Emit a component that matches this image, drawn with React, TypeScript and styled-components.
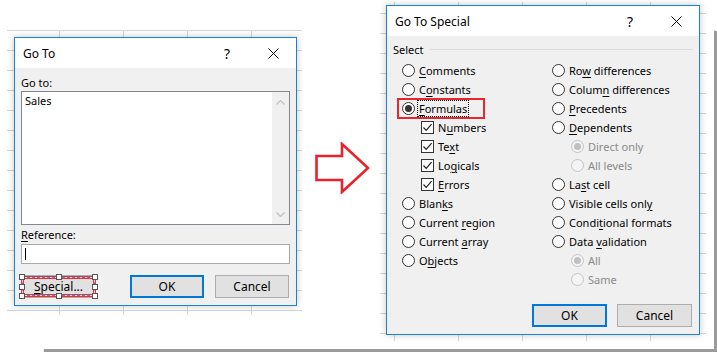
import React, { FC } from 'react';
import styled, { createGlobalStyle, css } from 'styled-components';

const GlobalStyle = createGlobalStyle`
  html, body {
    margin: 0;
    padding: 0;
    background: #fff;
  }
  body {
    font-family: 'Noto Sans', 'DejaVu Sans', sans-serif;
    font-size: 11px;
    color: #000;
  }
`;

const Page = styled.div`
  width: 717px;
  height: 352px;
  overflow: hidden;
`;

const Frame = styled.div`
  box-sizing: border-box;
  width: 714px;
  height: 349px;
  padding-left: 7px;
  display: flex;
  align-items: flex-start;
  background: #fff;
  box-shadow: 30px 17px 1px -14px #9b9b9b;
`;

const Sheet = styled.div<{ $w: number; $h: number; $col: number; $row: number }>`
  box-sizing: border-box;
  flex: none;
  width: ${p => p.$w}px;
  height: ${p => p.$h}px;
  background-color: #fff;
  background-image: linear-gradient(to right, #d4d4d4 1px, transparent 1px),
    linear-gradient(to bottom, #d4d4d4 1px, transparent 1px);
  background-size: 64px 20px;
  background-position: ${p => p.$col}px 0, 0 ${p => p.$row}px;
`;

const LeftSheet = styled(Sheet)`
  margin-top: 30px;
  padding: 7px 0 0 7px;
`;

const RightSheet = styled(Sheet)`
  margin: 2px 0 0 9px;
  padding: 3px 0 0 6px;
`;

const ArrowWrap = styled.svg`
  flex: none;
  margin: 142px 0 0 13px;
`;

const Dialog = styled.div<{ $w: number; $h: number }>`
  box-sizing: border-box;
  width: ${p => p.$w}px;
  height: ${p => p.$h}px;
  border: 1px solid #1883d7;
  background: #f0f0f0;
  box-shadow: 0 0 7px rgba(0, 0, 0, 0.22);
  display: flex;
  flex-direction: column;
`;

const TitleBar = styled.div`
  flex: none;
  height: 30px;
  display: flex;
  align-items: center;
  background: #fff;
  padding-left: 8px;
`;

const Title = styled.div`
  flex: 1;
  font-size: 12px;
`;

const TitleButton = styled.div`
  width: 46px;
  height: 30px;
  display: flex;
  align-items: center;
  justify-content: center;
  font-size: 14px;
`;

const Body = styled.div<{ $top: number }>`
  flex: 1;
  display: flex;
  flex-direction: column;
  padding: ${p => p.$top}px 6px 7px 6px;
`;

const Label = styled.div`
  height: 16px;
  line-height: 16px;
  white-space: nowrap;
`;

const Mn = styled.span`
  text-decoration: underline;
  text-underline-offset: 2px;
`;

const ListBox = styled.div`
  box-sizing: border-box;
  height: 134px;
  display: flex;
  border: 1px solid #828790;
  background: #fff;
`;

const ListItems = styled.div`
  flex: 1;
  padding: 1px 3px;
  line-height: 16px;
`;

const ScrollTrack = styled.div`
  width: 17px;
  display: flex;
  flex-direction: column;
  justify-content: space-between;
  align-items: center;
  padding: 8px 0 7px;
  background: #f0f0f0;
`;

const RefLabel = styled(Label)`
  margin: 2px 0 1px;
`;

const TextInput = styled.div`
  box-sizing: border-box;
  height: 20px;
  display: flex;
  align-items: center;
  padding-left: 3px;
  border: 1px solid #a9a9a9;
  background: #fff;
`;

const Caret = styled.span`
  width: 1px;
  height: 12px;
  background: #000;
`;

const Footer = styled.div<{ $gap: number }>`
  margin-top: auto;
  display: flex;
  justify-content: flex-end;
  gap: ${p => p.$gap}px;
  padding-right: 1px;
`;

const Button = styled.div<{ $default?: boolean; $w?: number }>`
  position: relative;
  box-sizing: border-box;
  width: ${p => p.$w ?? 75}px;
  height: 23px;
  display: flex;
  align-items: center;
  justify-content: center;
  font-size: 12px;
  background: #e1e1e1;
  border: 1px solid #adadad;
  ${p =>
    p.$default &&
    css`
      border: 2px solid #0078d7;
    `}
`;

const SpecialButton = styled(Button)`
  margin-right: auto;
`;

const Selection = styled.span`
  position: absolute;
  top: 0;
  bottom: 0;
  left: -1px;
  right: -1px;
  border: 1px solid #ea3033;
`;

const SelectionDash = styled.span`
  position: absolute;
  inset: 0;
  border: 1px dashed #5a80d2;
  box-shadow: inset 0 0 0 1px #ea3033;
`;

const Handle = styled.span<{ $x: number; $y: number }>`
  position: absolute;
  left: ${p => p.$x}%;
  top: ${p => p.$y}%;
  width: 4px;
  height: 4px;
  transform: translate(-50%, -50%);
  background: #fff;
  border: 1px solid #555;
`;

const GroupHeader = styled.div`
  display: flex;
  align-items: center;
  height: 16px;
`;

const GroupLine = styled.div`
  flex: 1;
  height: 1px;
  margin-left: 6px;
  background: #dcdcdc;
`;

const OptionGrid = styled.div`
  display: grid;
  grid-template-columns: 150px 1fr;
  padding: 4px 0 0 9px;
`;

const Column = styled.div`
  display: flex;
  flex-direction: column;
`;

const OptionRow = styled.div<{ $indent?: boolean; $disabled?: boolean }>`
  position: relative;
  height: 19px;
  display: flex;
  align-items: center;
  gap: 4px;
  padding-left: ${p => (p.$indent ? 19 : 0)}px;
  white-space: nowrap;
  color: ${p => (p.$disabled ? '#8a8a8a' : '#000')};
`;

const RadioCircle = styled.span<{ $checked?: boolean; $disabled?: boolean }>`
  box-sizing: border-box;
  flex: none;
  width: 13px;
  height: 13px;
  border-radius: 50%;
  border: 1px solid ${p => (p.$disabled ? '#c4c4c4' : '#333')};
  background: ${p => (p.$disabled ? '#f4f4f4' : '#fff')};
  display: flex;
  align-items: center;
  justify-content: center;
  &::after {
    content: '';
    width: 7px;
    height: 7px;
    border-radius: 50%;
    background: ${p => (p.$disabled ? '#c0c0c0' : '#333')};
    display: ${p => (p.$checked ? 'block' : 'none')};
  }
`;

const CheckBox = styled.span`
  box-sizing: border-box;
  flex: none;
  width: 13px;
  height: 13px;
  border: 1px solid #333;
  background: #fff;
  display: flex;
  align-items: center;
  justify-content: center;
`;

const FocusText = styled.span`
  outline: 1px dotted #000;
  outline-offset: 0;
  padding: 0 1px;
  margin-left: -1px;
`;

const Highlight = styled.span`
  position: absolute;
  left: -5px;
  top: -1px;
  width: 88px;
  height: 21px;
  box-sizing: border-box;
  border: 2px solid #e8262d;
`;

type Option = {
  label: string;
  mn?: number;
  kind?: 'radio' | 'check';
  indent?: boolean;
  disabled?: boolean;
  checked?: boolean;
  focus?: boolean;
  highlight?: boolean;
};

const leftOptions: Option[] = [
  { label: 'Comments', mn: 0 },
  { label: 'Constants', mn: 1 },
  { label: 'Formulas', mn: 0, checked: true, focus: true, highlight: true },
  { label: 'Numbers', mn: 1, kind: 'check', indent: true },
  { label: 'Text', mn: 2, kind: 'check', indent: true },
  { label: 'Logicals', mn: 2, kind: 'check', indent: true },
  { label: 'Errors', mn: 0, kind: 'check', indent: true },
  { label: 'Blanks', mn: 4 },
  { label: 'Current region', mn: 8 },
  { label: 'Current array', mn: 8 },
  { label: 'Objects', mn: 1 },
];

const rightOptions: Option[] = [
  { label: 'Row differences', mn: 2 },
  { label: 'Column differences', mn: 5 },
  { label: 'Precedents', mn: 0 },
  { label: 'Dependents', mn: 0 },
  { label: 'Direct only', indent: true, disabled: true, checked: true },
  { label: 'All levels', indent: true, disabled: true },
  { label: 'Last cell', mn: 2 },
  { label: 'Visible cells only', mn: 17 },
  { label: 'Conditional formats', mn: 5 },
  { label: 'Data validation', mn: 5 },
  { label: 'All', indent: true, disabled: true, checked: true },
  { label: 'Same', indent: true, disabled: true },
];

const Mnemonic: FC<{ text: string; at?: number }> = ({ text, at }) => {
  if (at === undefined) return <>{text}</>;
  return (
    <>
      {text.slice(0, at)}
      <Mn>{text[at]}</Mn>
      {text.slice(at + 1)}
    </>
  );
};

const CloseIcon = () => (
  <svg width="11" height="11" viewBox="0 0 11 11">
    <path d="M0.5 0.5 L10.5 10.5 M10.5 0.5 L0.5 10.5" stroke="#000" strokeWidth="1" />
  </svg>
);

const Chevron: FC<{ down?: boolean }> = ({ down }) => (
  <svg width="9" height="5" viewBox="0 0 9 5">
    <path
      d={down ? 'M0.5 0.5 L4.5 4.5 L8.5 0.5' : 'M0.5 4.5 L4.5 0.5 L8.5 4.5'}
      stroke="#c2c2c2"
      strokeWidth="1.3"
      fill="none"
    />
  </svg>
);

const CheckMark = () => (
  <svg width="11" height="11" viewBox="0 0 11 11">
    <path d="M1.5 5.5 L4.2 8.3 L9.6 2.2" stroke="#222" strokeWidth="1.2" fill="none" />
  </svg>
);

const DialogTitle: FC<{ text: string }> = ({ text }) => (
  <TitleBar>
    <Title>{text}</Title>
    <TitleButton>?</TitleButton>
    <TitleButton>
      <CloseIcon />
    </TitleButton>
  </TitleBar>
);

const OptionItem: FC<{ option: Option }> = ({ option }) => {
  const text = <Mnemonic text={option.label} at={option.mn} />;
  return (
    <OptionRow $indent={option.indent} $disabled={option.disabled}>
      {option.highlight && <Highlight />}
      {option.kind === 'check' ? (
        <CheckBox>
          <CheckMark />
        </CheckBox>
      ) : (
        <RadioCircle $checked={option.checked} $disabled={option.disabled} />
      )}
      {option.focus ? <FocusText>{text}</FocusText> : <span>{text}</span>}
    </OptionRow>
  );
};

const GoToDialog: FC = () => (
  <Dialog $w={283} $h={269}>
    <DialogTitle text="Go To" />
    <Body $top={7}>
      <Label>Go to:</Label>
      <ListBox>
        <ListItems>Sales</ListItems>
        <ScrollTrack>
          <Chevron />
          <Chevron down />
        </ScrollTrack>
      </ListBox>
      <RefLabel>
        <Mnemonic text="Reference:" at={0} />
      </RefLabel>
      <TextInput>
        <Caret />
      </TextInput>
      <Footer $gap={11}>
        <SpecialButton>
          <Mnemonic text="Special..." at={0} />
          <Selection>
            <SelectionDash />
            {[0, 50, 100].flatMap(x =>
              [0, 50, 100]
                .filter(y => !(x === 50 && y === 50))
                .map(y => <Handle key={`${x}-${y}`} $x={x} $y={y} />)
            )}
          </Selection>
        </SpecialButton>
        <Button $default $w={74}>
          OK
        </Button>
        <Button $w={74}>Cancel</Button>
      </Footer>
    </Body>
  </Dialog>
);

const GoToSpecialDialog: FC = () => (
  <Dialog $w={314} $h={330}>
    <DialogTitle text="Go To Special" />
    <Body $top={5}>
      <GroupHeader>
        <span>Select</span>
        <GroupLine />
      </GroupHeader>
      <OptionGrid>
        <Column>
          {leftOptions.map(o => (
            <OptionItem key={o.label} option={o} />
          ))}
        </Column>
        <Column>
          {rightOptions.map(o => (
            <OptionItem key={o.label} option={o} />
          ))}
        </Column>
      </OptionGrid>
      <Footer $gap={10}>
        <Button $default>OK</Button>
        <Button>Cancel</Button>
      </Footer>
    </Body>
  </Dialog>
);

const App: FC = () => (
  <Page>
    <GlobalStyle />
    <Frame>
      <LeftSheet $w={295} $h={285} $col={52} $row={0}>
        <GoToDialog />
      </LeftSheet>
      <ArrowWrap width="56" height="52" viewBox="0 0 56 52">
        <polygon
          points="1.5,14 27,14 27,2 53,26 27,50 27,38 1.5,38"
          fill="#fff"
          stroke="#e8222a"
          strokeWidth="2.6"
        />
      </ArrowWrap>
      <RightSheet $w={326} $h={339} $col={14} $row={11}>
        <GoToSpecialDialog />
      </RightSheet>
    </Frame>
  </Page>
);

export default App;
